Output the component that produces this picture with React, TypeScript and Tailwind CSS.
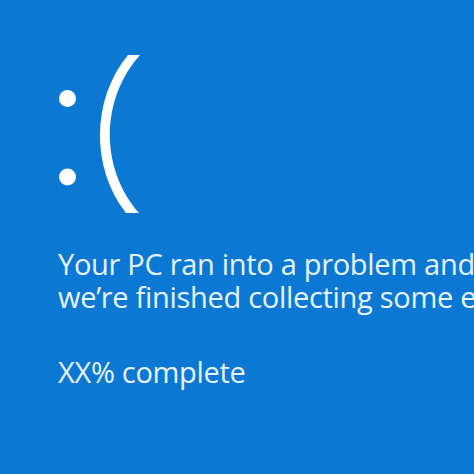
export default function App() {
  return (
    <main className="w-[474px] h-[474px] overflow-hidden bg-[#0b79d4] text-white" style={{ fontFamily: '"Open Sans", "Noto Sans", sans-serif' }}>
      <div className="flex flex-col">
        {/* sad face */}
        <svg width="150" height="215" viewBox="0 0 150 215" className="block" aria-label=":(">
          <circle cx="67.5" cy="98.5" r="8.5" fill="#ffffff" />
          <circle cx="67.5" cy="177" r="8.5" fill="#ffffff" />
          <path d="M128 55 C 91 100 91 168 126 213 L 139 213 C 100 168 100 100 140 55 Z" fill="#ffffff" />
        </svg>
        <div className="mt-[32px] pl-[58px] text-[29px] tracking-[-0.3px] leading-[33px] whitespace-nowrap text-[#e8f2fc]">
          <p>Your PC ran into a problem and needs to restart. We&apos;re just</p>
          <p>we&rsquo;re finished collecting some error info, and then we&apos;ll restart for you.</p>
        </div>
        <p className="mt-[42px] pl-[58px] text-[29px] tracking-[-0.3px] leading-[33px] whitespace-nowrap text-[#e8f2fc]">XX% complete</p>
      </div>
    </main>
  );
}
